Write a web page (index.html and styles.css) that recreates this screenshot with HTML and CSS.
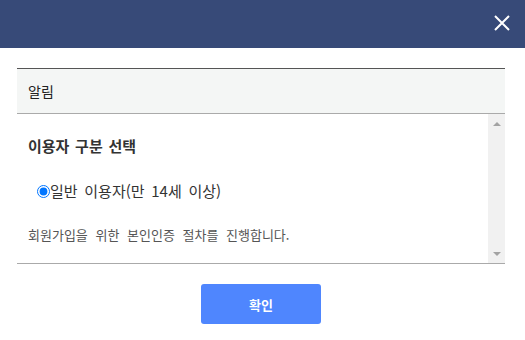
FILE: index.html
```html
<!DOCTYPE html>
<html lang="ko">
<head>
<meta charset="utf-8">
<link rel="stylesheet" href="styles.css">
</head>
<body>
<div class="topbar">
  <svg class="close" width="16" height="16" viewBox="0 0 16 16"><path d="M1 1 L15 15 M15 1 L1 15" stroke="#fff" stroke-width="2" fill="none"/></svg>
</div>
<div class="content">
  <div class="box">
    <div class="box-head">알림</div>
    <div class="box-body">
      <div class="scroll-content">
        <div class="title">이용자 구분 선택</div>
        <label class="radio-row"><input type="radio" name="u" checked><span>일반 이용자(만 14세 이상)</span></label>
        <p class="desc">회원가입을 위한 본인인증 절차를 진행합니다.</p>
      </div>
      <div class="scrollbar"><span class="arrow-up"></span><span class="arrow-down"></span></div>
    </div>
  </div>
  <div class="actions"><button class="btn">확인</button></div>
</div>
</body>
</html>
```
FILE: styles.css
```css
* { box-sizing: border-box; }
body {
  margin: 0;
  font-family: "Noto Sans CJK KR", "Noto Sans", sans-serif;
  color: #333;
  background: #fff;
}
.topbar {
  height: 48px;
  background: #374a78;
  display: flex;
  justify-content: flex-end;
  align-items: center;
  padding-right: 15px;
}
.close { display: block; margin-top: -2px; }
.content {
  padding: 20px 20px 0 17px;
}
.box {
  border-top: 1px solid #555;
  border-bottom: 1px solid #aaa;
}
.box-head {
  height: 45px;
  background: #f4f6f5;
  border-bottom: 1px solid #aaa;
  padding-left: 11px;
  font-size: 14px;
  line-height: 44px;
  color: #222;
}
.box-body {
  height: 149px;
  display: flex;
}
.scroll-content {
  flex: 1;
  padding: 21px 0 0 11px;
}
.title {
  font-size: 15px;
  font-weight: bold;
  line-height: 22px;
  color: #333;
  word-spacing: 1.5px;
}
.radio-row {
  display: flex;
  align-items: center;
  margin: 23px 0 0 9px;
  font-size: 15px;
  line-height: 22px;
  color: #333;
  word-spacing: 2.5px;
}
.radio-row input {
  margin: 0;
  width: 13px;
  height: 13px;
}
.desc {
  margin: 23px 0 0;
  font-size: 13px;
  line-height: 20px;
  color: #555;
  word-spacing: 4px;
}
.scrollbar {
  width: 17px;
  background: #f1f1f1;
  display: flex;
  flex-direction: column;
  justify-content: space-between;
  align-items: center;
  padding: 8px 0 7px;
}
.arrow-up {
  width: 0; height: 0;
  border-left: 4px solid transparent;
  border-right: 4px solid transparent;
  border-bottom: 4px solid #a3a3a3;
}
.arrow-down {
  width: 0; height: 0;
  border-left: 4px solid transparent;
  border-right: 4px solid transparent;
  border-top: 4px solid #a3a3a3;
}
.actions {
  display: flex;
  justify-content: center;
  padding-top: 20px;
}
.btn {
  width: 120px;
  height: 40px;
  border: 0;
  border-radius: 3px;
  background: #4f86fe;
  color: #fff;
  font-family: inherit;
  font-size: 13px;
  font-weight: bold;
}
```
